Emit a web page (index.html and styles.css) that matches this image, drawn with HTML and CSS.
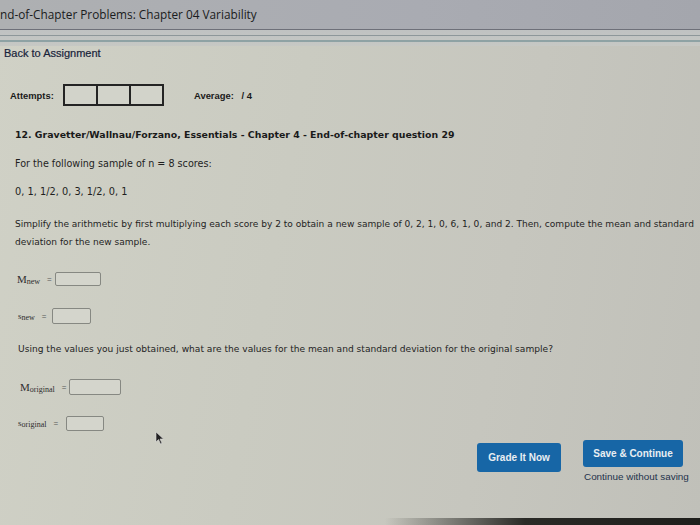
FILE: index.html
```
<!DOCTYPE html>
<html>
<head>
<meta charset="utf-8">
<link rel="stylesheet" href="styles.css">
</head>
<body>
<div class="page">
  <div class="header">nd-of-Chapter Problems: Chapter 04 Variability</div>
  <div class="bands"><div class="band1"></div><div class="band2"></div></div>
  <div class="back">Back to Assignment</div>
  <div class="attempts">
    <span class="att-label">Attempts:</span>
    <span class="att-boxes"><span class="abox"></span><span class="abox"></span><span class="abox"></span></span>
    <span class="avg">Average:&nbsp;&nbsp; / 4</span>
  </div>
  <div class="qtitle">12. Gravetter/Wallnau/Forzano, Essentials - Chapter 4 - End-of-chapter question 29</div>
  <div class="p p1">For the following sample of n = 8 scores:</div>
  <div class="p p2">0, 1, 1/2, 0, 3, 1/2, 0, 1</div>
  <div class="p p3"><span class="nowrap">Simplify the arithmetic by first multiplying each score by 2 to obtain a new sample of 0, 2, 1, 0, 6, 1, 0, and 2. Then, compute the mean and standard</span><br>deviation for the new sample.</div>
  <div class="ans a1"><span class="var">M<sub>new</sub></span><span class="eq">=</span><span class="inp w46"></span></div>
  <div class="ans a2"><span class="var small">s<sub>new</sub></span><span class="eq">=</span><span class="inp w39"></span></div>
  <div class="p p4">Using the values you just obtained, what are the values for the mean and standard deviation for the original sample?</div>
  <div class="ans a3"><span class="var">M<sub>original</sub></span><span class="eq">=</span><span class="inp w52"></span></div>
  <div class="ans a4"><span class="var small">s<sub>original</sub></span><span class="eq">=</span><span class="inp w38"></span></div>
  <div class="actions">
    <button class="btn grade">Grade It Now</button>
    <div class="save-col">
      <button class="btn save">Save &amp; Continue</button>
      <div class="nosave">Continue without saving</div>
    </div>
  </div>
  <svg class="cursor" width="10" height="14" viewBox="0 0 10 14"><path d="M1 1 L1 11 L3.5 8.5 L5.5 13 L7 12.3 L5 8 L8.5 8 Z" fill="#222" stroke="#ddd" stroke-width="0.6"/></svg>
  <div class="bezel"></div>
</div>
</body>
</html>
```
FILE: styles.css
```
html, body {
  margin: 0;
  padding: 0;
}
body {
  width: 700px;
  height: 525px;
  overflow: hidden;
  background: linear-gradient(100deg, #d0d1c6 0%, #cacbc1 40%, #c6c6be 70%, #c0c0b9 100%);
  font-family: "DejaVu Sans", Verdana, sans-serif;
  color: #1f1f1f;
}
.page {
  position: relative;
  width: 700px;
  height: 525px;
}
.header {
  height: 30px;
  line-height: 29px;
  background: linear-gradient(90deg, #aeb0b2 0%, #a9abb2 60%, #a4a6ad 100%);
  border-bottom: 1px solid #6e7079;
  font-family: "Open Sans", sans-serif;
  font-size: 11.8px;
  font-weight: 500;
  color: #1a1c20;
  box-sizing: border-box;
}
.bands {
  height: 16px;
  box-sizing: border-box;
  padding-top: 5px;
  background: linear-gradient(180deg, #bfc2c2 0%, #c6c8c4 100%);
}
.band1 {
  height: 1px;
  background: #8d979a;
}
.band2 {
  height: 2px;
  margin-top: 4px;
  background: #8ea2a4;
}
.back {
  height: 14px;
  line-height: 14px;
  padding-left: 4px;
  font-family: "Liberation Sans", Arial, sans-serif;
  font-size: 11px;
  color: #18233a;
  -webkit-text-stroke: 0.2px #18233a;
}
.attempts {
  display: flex;
  align-items: center;
  height: 22px;
  margin-top: 24px;
  font-family: "Liberation Sans", Arial, sans-serif;
  font-weight: bold;
  font-size: 9.4px;
  color: #1a1a1a;
}
.att-label {
  padding-left: 10px;
  width: 53px;
}
.att-boxes {
  display: flex;
  height: 22px;
  border: 2px solid #242424;
  box-sizing: border-box;
  background: #d2d3ca;
}
.abox {
  width: 31px;
  height: 100%;
}
.abox + .abox {
  border-left: 2px solid #242424;
}
.avg {
  margin-left: 30px;
}
.qtitle {
  margin-top: 22px;
  height: 14px;
  line-height: 14px;
  padding-left: 15px;
  font-weight: bold;
  font-size: 9.4px;
  color: #1a1a1a;
}
.p {
  padding-left: 15px;
  font-size: 9.2px;
  line-height: 18px;
  color: #1f1f1f;
}
.nowrap { white-space: nowrap; }
.p1 { margin-top: 13px; font-size: 9.6px; }
.p2 { margin-top: 10px; font-size: 9.8px; }
.p3 { margin-top: 14px; font-size: 9.05px; }
.p4 { margin-top: 16px; padding-left: 18px; font-size: 9.1px; }
.ans {
  display: flex;
  align-items: center;
  font-family: "Liberation Serif", "Times New Roman", serif;
  color: #2e2e2e;
}
.a1 { margin-top: 21px; padding-left: 17px; height: 14px; }
.a2 { margin-top: 22px; padding-left: 18px; height: 16px; }
.a3 { margin-top: 21px; padding-left: 20px; height: 16px; }
.a4 { margin-top: 21px; padding-left: 18px; height: 15px; }
.var {
  font-size: 11px;
}
.var.small {
  font-size: 9px;
}
.var sub {
  font-size: 8px;
  vertical-align: -1px;
}
.eq {
  font-family: "Liberation Sans", Arial, sans-serif;
  font-size: 8px;
  margin-left: 7px;
  margin-right: 3px;
  color: #555;
}
.a2 .eq { margin-right: 5px; }
.a3 .eq { margin-right: 3px; }
.a4 .eq { margin-right: 8px; }
.inp {
  display: block;
  height: 100%;
  box-sizing: border-box;
  border: 1px solid #868882;
  border-radius: 2px;
  background: #d4d5cc;
}
.w46 { width: 46px; }
.w39 { width: 39px; }
.w52 { width: 52px; }
.w38 { width: 38px; }
.actions {
  display: flex;
  justify-content: flex-end;
  align-items: flex-start;
  gap: 22px;
  margin-top: 9px;
  padding-right: 17px;
}
.btn {
  border: none;
  border-radius: 3px;
  background: #1766a6;
  color: #e9eef2;
  font-family: "Liberation Sans", Arial, sans-serif;
  font-weight: bold;
  font-size: 10px;
  padding: 0;
}
.grade {
  width: 84px;
  height: 29px;
  margin-top: 3px;
}
.save-col {
  display: flex;
  flex-direction: column;
  align-items: flex-start;
  width: 100px;
}
.save {
  width: 100px;
  height: 27px;
}
.nosave {
  margin-top: 4px;
  padding-left: 1px;
  white-space: nowrap;
  font-family: "Liberation Sans", Arial, sans-serif;
  font-size: 9.9px;
  color: #24324b;
}
.cursor {
  position: absolute;
  left: 155px;
  top: 431px;
}
.bezel {
  position: absolute;
  left: 0;
  right: 0;
  bottom: 0;
  height: 7px;
  background: linear-gradient(90deg, rgba(40,40,36,0) 0%, rgba(40,40,36,0) 55%, #2a2a26 75%, #1e1e1b 100%);
}
```
